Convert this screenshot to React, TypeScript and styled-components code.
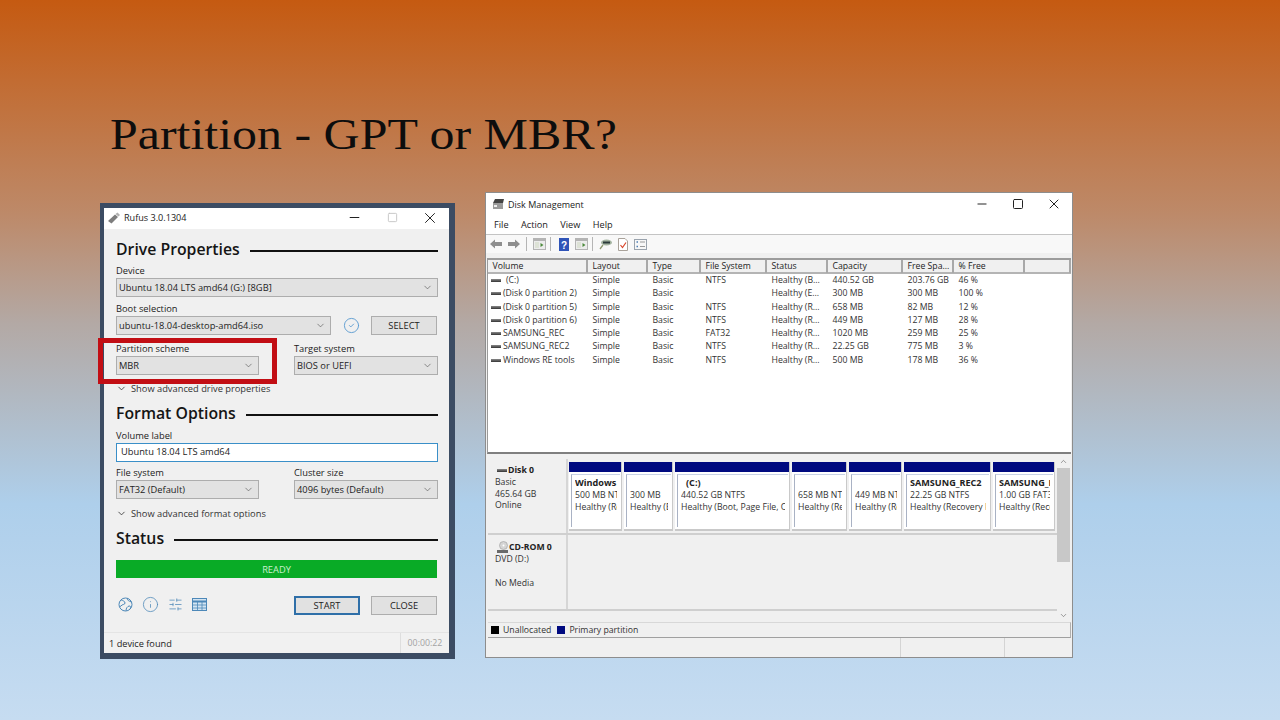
import React from 'react';
import styled, { createGlobalStyle } from 'styled-components';
import { ChevronDown, ChevronUp, CircleCheck, Info, SlidersHorizontal, Minus, Square, X } from 'lucide-react';

const Reset = createGlobalStyle`
  html, body { margin: 0; padding: 0; }
  * { box-sizing: border-box; }
`;

const UI = `"Open Sans", "Noto Sans", sans-serif`;

// slide
const Slide = styled.div`
  position: relative;
  width: 1280px;
  height: 720px;
  overflow: hidden;
  background: linear-gradient(180deg, #c55a11 0%, #bd8a6a 30%, #b3a9a5 45%, #aecfeb 70%, #c6dcf1 100%);
`;

const Title = styled.h1`
  margin: 0 0 0 110px;
  padding-top: 109px;
  font: 400 44px/52px "Liberation Serif", serif;
  color: #0d0d0d;
  white-space: nowrap;
  transform: scaleX(1.135);
  transform-origin: left;
`;

// rufus window
const RufusWindow = styled.div`
  position: absolute;
  left: 100px;
  top: 203px;
  width: 355px;
  height: 456px;
  display: flex;
  flex-direction: column;
  background: #f0f0f0;
  border: solid #3c4c63;
  border-width: 5px 6px 6px 4px;
  font-family: ${UI};
  color: #222;
`;

const RufusTitleBar = styled.div`
  height: 21px;
  flex: none;
  display: flex;
  align-items: center;
  padding: 0 0 2px 3px;
  background: #fff;
  font-size: 9.1px;
`;

const AppName = styled.span`
  margin-left: 3px;
  flex: 1;
`;

const CaptionButton = styled.span<{ $w: number; $dim?: boolean }>`
  width: ${p => p.$w}px;
  display: flex;
  justify-content: center;
  color: ${p => (p.$dim ? '#c4c4c4' : '#222')};
`;

const RufusBody = styled.div`
  flex: 1;
  padding: 0 11px 0 12px;
`;

const SectionHead = styled.div<{ $top: number }>`
  display: flex;
  align-items: center;
  gap: 10px;
  height: 20px;
  margin-top: ${p => p.$top}px;
  font-size: 15.8px;
  font-weight: 600;
  color: #151515;
  &::after {
    content: '';
    flex: 1;
    height: 2px;
    margin-top: 4px;
    background: #111;
  }
`;

const Field = styled.div<{ $top: number }>`
  margin-top: ${p => p.$top}px;
`;

const FieldLabel = styled.div`
  height: 13px;
  margin-bottom: 1px;
  font-size: 9.3px;
  line-height: 13px;
`;

const Dropdown = styled.div<{ $w?: number }>`
  width: ${p => (p.$w ? `${p.$w}px` : '100%')};
  height: 19px;
  display: flex;
  align-items: center;
  justify-content: space-between;
  padding: 0 4px 0 2px;
  background: #e2e2e2;
  border: 1px solid #adadad;
  font-size: 9.3px;
  white-space: nowrap;
`;

const TextInput = styled.div`
  height: 19px;
  padding: 0 4px;
  line-height: 16px;
  background: #fff;
  border: 1px solid #3a8fc8;
  font-size: 9.3px;
`;

const TwoCols = styled.div<{ $top: number }>`
  display: flex;
  justify-content: space-between;
  margin-top: ${p => p.$top}px;
`;

const Col = styled.div<{ $w: number }>`
  width: ${p => p.$w}px;
`;

const BootRow = styled.div`
  display: flex;
  align-items: center;
`;

const CheckSlot = styled.span`
  width: 40px;
  display: flex;
  justify-content: center;
  color: #5a9bd0;
`;

const PushButton = styled.div<{ $primary?: boolean }>`
  width: 66px;
  height: 19px;
  display: flex;
  align-items: center;
  justify-content: center;
  background: #e1e1e1;
  border: ${p => (p.$primary ? '2px solid #2f6fa8' : '1px solid #adadad')};
  font-size: 9.3px;
`;

const Toggle = styled.div<{ $top: number }>`
  display: flex;
  align-items: center;
  gap: 4px;
  height: 14px;
  margin-top: ${p => p.$top}px;
  font-size: 9.3px;
  color: #333;
`;

const ReadyBar = styled.div`
  height: 18px;
  margin-top: 12px;
  margin-right: 1px;
  display: flex;
  align-items: center;
  justify-content: center;
  background: #09ab26;
  color: #c9f0cf;
  font-size: 9.3px;
`;

const ActionRow = styled.div`
  display: flex;
  align-items: center;
  margin-top: 18px;
`;

const IconTray = styled.div`
  display: flex;
  align-items: center;
  gap: 9px;
  flex: 1;
  margin: -2px 0 0 2px;
  color: #4d88b8;
`;

const Actions = styled.div`
  display: flex;
  gap: 11px;
  margin-right: 1px;
`;

const RufusStatus = styled.div`
  height: 21px;
  flex: none;
  display: flex;
  align-items: center;
  justify-content: space-between;
  padding-left: 5px;
  background: #f1f1f1;
  border-top: 1px solid #e4e4e4;
  font-size: 9.2px;
`;

const Timer = styled.span`
  height: 100%;
  width: 49px;
  display: flex;
  align-items: center;
  justify-content: center;
  border-left: 1px solid #dedede;
  color: #a3a3a3;
  font-size: 8.8px;
`;

const RedBox = styled.div`
  position: absolute;
  left: -6px;
  top: 130px;
  width: 179px;
  height: 46px;
  border: 5px solid #c20e14;
  pointer-events: none;
`;

// disk management window
const DiskWindow = styled.div`
  position: absolute;
  left: 485px;
  top: 192px;
  width: 588px;
  height: 466px;
  display: flex;
  flex-direction: column;
  background: #f0f0f0;
  border: 1px solid #8d8d8d;
  font-family: ${UI};
  font-size: 8.7px;
  color: #222;
`;

const DiskTitleBar = styled.div`
  height: 22px;
  flex: none;
  display: flex;
  align-items: center;
  padding-left: 6px;
  background: #fff;
  font-size: 9px;
`;

const DiskTitleText = styled.span`
  margin-left: 3px;
  flex: 1;
`;

const MenuBar = styled.div`
  height: 20px;
  flex: none;
  display: flex;
  align-items: center;
  gap: 12.4px;
  padding-left: 8px;
  background: #fff;
  border-bottom: 1px solid #c4c4c4;
  font-size: 9.2px;
`;

const ToolBar = styled.div`
  height: 18px;
  flex: none;
  display: flex;
  align-items: center;
  padding-left: 3px;
  background: #f8f8f8;
`;

const Tool = styled.span<{ $ml: number }>`
  display: flex;
  margin-left: ${p => p.$ml}px;
`;

const ToolSep = styled.span<{ $ml: number }>`
  width: 1px;
  height: 14px;
  margin-left: ${p => p.$ml}px;
  background: #b5b5b5;
`;

const ListPane = styled.div`
  height: 196px;
  flex: none;
  margin: 5px 1px 0 1px;
  background: #fff;
  border-left: 1px solid #9a9a9a;
  border-bottom: 2px solid #7f7f7f;
`;

const columns = '100px 60px 53px 66px 61px 75px 51px 71px 46px';

const ListHead = styled.div`
  display: grid;
  grid-template-columns: ${columns};
  height: 16px;
  background: #f0f0f0;
  border-top: 2px solid #9c9c9c;
  border-bottom: 2px solid #b4b4b4;
`;

const HeadCell = styled.div`
  padding-left: 4.5px;
  line-height: 13px;
  border-right: 2px solid #a8a8a8;
  white-space: nowrap;
`;

const ListRow = styled.div`
  display: grid;
  grid-template-columns: ${columns};
  height: 13.25px;
  line-height: 13px;
  color: #333;
`;

const Cell = styled.div`
  padding-left: 4.5px;
  white-space: nowrap;
  overflow: hidden;
`;

const VolumeCell = styled(Cell)`
  display: flex;
  align-items: center;
  gap: 2px;
  padding-left: 3px;
`;

const VolumeName = styled.span<{ $indent?: boolean }>`
  padding-left: ${p => (p.$indent ? 3 : 0)}px;
`;

const DriveMark = styled.span`
  width: 10px;
  height: 3px;
  flex: none;
  background: linear-gradient(180deg, #8a8a8a, #333);
`;

const GraphPane = styled.div`
  flex: none;
  height: 168px;
  margin-right: 2px;
  display: flex;
`;

const DiskRows = styled.div`
  flex: 1;
  padding: 5px 0 0 2px;
  min-width: 0;
`;

const DiskRow = styled.div<{ $h: number }>`
  display: flex;
  height: ${p => p.$h}px;
  border-bottom: 2px solid #cfcfcf;
`;

const DiskInfo = styled.div`
  width: 80px;
  flex: none;
  padding: 6px 0 0 7px;
  line-height: 11.8px;
  color: #333;
  border-right: 2px solid #d6d6d6;
`;

const DiskName = styled.div`
  display: flex;
  align-items: center;
  gap: 1px;
  font-weight: 700;
  color: #222;
  margin-left: 2px;
`;

const EmptyLine = styled.div`
  height: 11.8px;
`;

const Partitions = styled.div`
  flex: 1;
  display: flex;
  gap: 2px;
  padding: 3px 0 2px 1px;
  min-width: 0;
`;

const Partition = styled.div<{ $w: number }>`
  width: ${p => p.$w}px;
  flex: none;
  display: flex;
  flex-direction: column;
  background: #fff;
  border: solid #c9c9c9;
  border-width: 0 1px 2px 0;
  &::before {
    content: '';
    height: 10px;
    flex: none;
    background: #000a80;
  }
`;

const PartitionInner = styled.div`
  flex: 1;
  margin: 2px 1px 2px 2px;
  padding: 2px 3px 0 3px;
  border-left: 1px solid #a9b2c4;
  border-top: 1px solid #c8d2e6;
`;

const PartitionText = styled.div`
  overflow: hidden;
  white-space: nowrap;
  line-height: 12px;
  color: #333;
`;

const PartName = styled.div<{ $indent?: boolean }>`
  height: 12px;
  font-size: 9.1px;
  font-weight: 700;
  color: #222;
  padding-left: ${p => (p.$indent ? 5 : 0)}px;
`;

const ScrollTrack = styled.div`
  width: 13px;
  flex: none;
  display: flex;
  flex-direction: column;
  align-items: center;
  padding-top: 3px;
  color: #555;
`;

const ScrollThumb = styled.div`
  width: 100%;
  height: 94px;
  margin: 2px 0 49px;
  background: #c8c8c8;
`;

const Legend = styled.div`
  height: 16px;
  flex: none;
  display: flex;
  align-items: center;
  gap: 4px;
  margin: 0 1px 0 2px;
  padding-left: 3px;
  border-top: 1px solid #d8d8d8;
  border-bottom: 1px solid #a0a0a0;
  border-right: 1px solid #b0b0b0;
  color: #333;
`;

const Swatch = styled.span<{ $c: string }>`
  width: 8px;
  height: 8px;
  background: ${p => p.$c};
`;

const LegendItem = styled.span`
  margin-right: 2px;
`;

const DiskStatus = styled.div`
  flex: 1;
  display: grid;
  grid-template-columns: 1fr 104px 67px;
`;

const StatusCell = styled.div`
  border-right: 1px solid #d4d4d4;
  &:last-child { border-right: 0; }
`;

// drawings
const UsbIcon = () => (
  <svg width="14" height="14" viewBox="0 0 14 14">
    <path d="M1 10 L8 3.5 L11 6 L4.5 12.5 Z" fill="#7d7d7d" />
    <path d="M8.5 3 L10.5 1.5 L13 4 L11.5 5.5 Z" fill="#b0b0b0" />
  </svg>
);

const DiskAppIcon = () => (
  <svg width="13" height="12" viewBox="0 0 13 12">
    <path d="M3 1 H12 L11 5 H1 Z" fill="#444" />
    <rect x="1" y="5" width="10" height="6" fill="#9a9a9a" />
    <rect x="2" y="7" width="3" height="2" fill="#eee" />
  </svg>
);

const Arrow = ({ flip }: { flip?: boolean }) => (
  <svg width="14" height="12" viewBox="0 0 14 12" style={{ transform: flip ? 'scaleX(-1)' : undefined }}>
    <path d="M1 6 L6 1.5 V4 H13 V8 H6 V10.5 Z" fill="#8e8e8e" />
  </svg>
);

const PaneIcon = ({ mark }: { mark: string }) => (
  <svg width="13" height="12" viewBox="0 0 13 12">
    <rect x="0.5" y="0.5" width="12" height="11" fill="#ececec" stroke="#b4b4b4" />
    <rect x="0.5" y="0.5" width="12" height="2.5" fill="#b4b4b4" />
    <rect x="2" y="4" width="4" height="6" fill="#dde2d6" />
    <path d="M7.5 5 L10.5 7 L7.5 9 Z" fill={mark} />
  </svg>
);

const HelpIcon = () => (
  <svg width="10" height="13" viewBox="0 0 10 13">
    <rect width="10" height="13" fill="#2f54b8" />
    <text x="5" y="10.5" textAnchor="middle" fontSize="10" fontWeight="700" fill="#fff" fontFamily="Liberation Sans, sans-serif">?</text>
  </svg>
);

const RescanIcon = () => (
  <svg width="13" height="12" viewBox="0 0 13 12">
    <ellipse cx="7.5" cy="4.5" rx="5.5" ry="3" fill="#a3b3a0" />
    <rect x="4" y="3.5" width="7" height="2" fill="#2c3a3a" />
    <path d="M4 7 L1 11" stroke="#8d9a6f" strokeWidth="1.3" />
  </svg>
);

const CheckDocIcon = () => (
  <svg width="10" height="13" viewBox="0 0 10 13">
    <path d="M0.5 0.5 H7 L9.5 3 V12.5 H0.5 Z" fill="#fff" stroke="#a9a29a" />
    <path d="M2.5 7 L4.5 9.5 L8 4.5" fill="none" stroke="#d9462a" strokeWidth="1.2" />
  </svg>
);

const PropsIcon = () => (
  <svg width="13" height="11" viewBox="0 0 13 11">
    <rect x="0.5" y="0.5" width="12" height="10" fill="#f7f7f7" stroke="#9aa3ad" />
    <path d="M2.5 3 H4 M2.5 7.5 H4" stroke="#4d7fb5" strokeWidth="1.5" />
    <path d="M6 3 H11 M6 7.5 H11" stroke="#9a9a9a" />
  </svg>
);

const CdIcon = () => (
  <svg width="11" height="13" viewBox="0 0 11 13">
    <circle cx="6.5" cy="4.5" r="4" fill="#d5d5d5" stroke="#9a9a9a" strokeWidth="0.6" />
    <circle cx="6.5" cy="4.5" r="1" fill="#fff" />
    <rect x="0" y="9" width="11" height="3" fill="#6a6a6a" />
  </svg>
);

const GlobeIcon = () => (
  <svg width="15" height="15" viewBox="0 0 15 15" fill="none" stroke="currentColor" strokeWidth="1">
    <circle cx="7.5" cy="7.5" r="6.5" />
    <path d="M3 2.8 C5 4 7 4 7 6 C7 8 4 7 3 9 L2 9.5 M9.5 1.5 C9 3.5 11 4 13.5 5 M8 13.8 C8 11 9.5 9.5 11 9 C12.5 8.7 13 10 12.2 12" />
  </svg>
);

const TableIcon = () => (
  <svg width="15" height="13" viewBox="0 0 15 13" fill="none" stroke="currentColor">
    <rect x="0.5" y="0.5" width="14" height="12" fill="#d3e4f2" />
    <path d="M0.5 3.5 H14.5" strokeWidth="2" />
    <path d="M0.5 7 H14.5 M0.5 10 H14.5 M5.5 4 V12.5 M10 4 V12.5" strokeWidth="0.8" />
  </svg>
);

const rows = [
  ['(C:)', 'Simple', 'Basic', 'NTFS', 'Healthy (B...', '440.52 GB', '203.76 GB', '46 %'],
  ['(Disk 0 partition 2)', 'Simple', 'Basic', '', 'Healthy (E...', '300 MB', '300 MB', '100 %'],
  ['(Disk 0 partition 5)', 'Simple', 'Basic', 'NTFS', 'Healthy (R...', '658 MB', '82 MB', '12 %'],
  ['(Disk 0 partition 6)', 'Simple', 'Basic', 'NTFS', 'Healthy (R...', '449 MB', '127 MB', '28 %'],
  ['SAMSUNG_REC', 'Simple', 'Basic', 'FAT32', 'Healthy (R...', '1020 MB', '259 MB', '25 %'],
  ['SAMSUNG_REC2', 'Simple', 'Basic', 'NTFS', 'Healthy (R...', '22.25 GB', '775 MB', '3 %'],
  ['Windows RE tools', 'Simple', 'Basic', 'NTFS', 'Healthy (R...', '500 MB', '178 MB', '36 %'],
];

const heads = ['Volume', 'Layout', 'Type', 'File System', 'Status', 'Capacity', 'Free Spa...', '% Free', ''];

const partitions = [
  { w: 53, name: 'Windows', size: '500 MB NTFS', state: 'Healthy (Recovery Partition)' },
  { w: 49, name: '', size: '300 MB', state: 'Healthy (EFI System)' },
  { w: 115, name: '(C:)', indent: true, size: '440.52 GB NTFS', state: 'Healthy (Boot, Page File, Crash Dump)' },
  { w: 55, name: '', size: '658 MB NTFS', state: 'Healthy (Recovery Partition)' },
  { w: 53, name: '', size: '449 MB NTFS', state: 'Healthy (Recovery Partition)' },
  { w: 87, name: 'SAMSUNG_REC2', size: '22.25 GB NTFS', state: 'Healthy (Recovery Partition)' },
  { w: 62, name: 'SAMSUNG_REC', size: '1.00 GB FAT32', state: 'Healthy (Recovery Partition)' },
];

const Chevron = () => <ChevronDown size={11} strokeWidth={1.4} color="#555" />;

function Rufus() {
  return (
    <RufusWindow>
      <RufusTitleBar>
        <UsbIcon />
        <AppName>Rufus 3.0.1304</AppName>
        <CaptionButton $w={38}><Minus size={15} strokeWidth={1.6} /></CaptionButton>
        <CaptionButton $w={38} $dim><Square size={11} strokeWidth={2} /></CaptionButton>
        <CaptionButton $w={38}><X size={18} strokeWidth={1.3} /></CaptionButton>
      </RufusTitleBar>
      <RufusBody>
        <SectionHead $top={10}>Drive Properties</SectionHead>
        <Field $top={5}>
          <FieldLabel>Device</FieldLabel>
          <Dropdown>Ubuntu 18.04 LTS amd64 (G:) [8GB]<Chevron /></Dropdown>
        </Field>
        <Field $top={5}>
          <FieldLabel>Boot selection</FieldLabel>
          <BootRow>
            <Dropdown $w={215}>ubuntu-18.04-desktop-amd64.iso<Chevron /></Dropdown>
            <CheckSlot><CircleCheck size={17} strokeWidth={1.3} /></CheckSlot>
            <PushButton>SELECT</PushButton>
          </BootRow>
        </Field>
        <TwoCols $top={7}>
          <Col $w={143}>
            <FieldLabel>Partition scheme</FieldLabel>
            <Dropdown>MBR<Chevron /></Dropdown>
          </Col>
          <Col $w={144}>
            <FieldLabel>Target system</FieldLabel>
            <Dropdown>BIOS or UEFI<Chevron /></Dropdown>
          </Col>
        </TwoCols>
        <Toggle $top={6}><ChevronDown size={11} strokeWidth={1.8} />Show advanced drive properties</Toggle>
        <SectionHead $top={8}>Format Options</SectionHead>
        <Field $top={6}>
          <FieldLabel>Volume label</FieldLabel>
          <TextInput>Ubuntu 18.04 LTS amd64</TextInput>
        </Field>
        <TwoCols $top={4}>
          <Col $w={143}>
            <FieldLabel>File system</FieldLabel>
            <Dropdown>FAT32 (Default)<Chevron /></Dropdown>
          </Col>
          <Col $w={144}>
            <FieldLabel>Cluster size</FieldLabel>
            <Dropdown>4096 bytes (Default)<Chevron /></Dropdown>
          </Col>
        </TwoCols>
        <Toggle $top={7}><ChevronDown size={11} strokeWidth={1.8} />Show advanced format options</Toggle>
        <SectionHead $top={8}>Status</SectionHead>
        <ReadyBar>READY</ReadyBar>
        <ActionRow>
          <IconTray>
            <GlobeIcon />
            <Info size={17} strokeWidth={1.1} />
            <SlidersHorizontal size={15} strokeWidth={1.2} />
            <TableIcon />
          </IconTray>
          <Actions>
            <PushButton $primary>START</PushButton>
            <PushButton>CLOSE</PushButton>
          </Actions>
        </ActionRow>
      </RufusBody>
      <RufusStatus>
        1 device found
        <Timer>00:00:22</Timer>
      </RufusStatus>
      <RedBox />
    </RufusWindow>
  );
}

function DiskManagement() {
  return (
    <DiskWindow>
      <DiskTitleBar>
        <DiskAppIcon />
        <DiskTitleText>Disk Management</DiskTitleText>
        <CaptionButton $w={36}><Minus size={14} strokeWidth={1.7} /></CaptionButton>
        <CaptionButton $w={36}><Square size={12} strokeWidth={2} /></CaptionButton>
        <CaptionButton $w={36}><X size={16} strokeWidth={1.5} /></CaptionButton>
      </DiskTitleBar>
      <MenuBar>
        <span>File</span>
        <span>Action</span>
        <span>View</span>
        <span>Help</span>
      </MenuBar>
      <ToolBar>
        <Tool $ml={0}><Arrow /></Tool>
        <Tool $ml={4}><Arrow flip /></Tool>
        <ToolSep $ml={5} />
        <Tool $ml={6}><PaneIcon mark="#4c8a3c" /></Tool>
        <ToolSep $ml={4} />
        <Tool $ml={8}><HelpIcon /></Tool>
        <Tool $ml={6}><PaneIcon mark="#4c8a3c" /></Tool>
        <ToolSep $ml={4} />
        <Tool $ml={6}><RescanIcon /></Tool>
        <Tool $ml={6}><CheckDocIcon /></Tool>
        <Tool $ml={6}><PropsIcon /></Tool>
      </ToolBar>
      <ListPane>
        <ListHead>
          {heads.map((h, i) => <HeadCell key={i}>{h}</HeadCell>)}
        </ListHead>
        {rows.map((r, n) => (
          <ListRow key={r[0]}>
            <VolumeCell><DriveMark /><VolumeName $indent={n === 0}>{r[0]}</VolumeName></VolumeCell>
            {r.slice(1).map((c, i) => <Cell key={i}>{c}</Cell>)}
          </ListRow>
        ))}
      </ListPane>
      <GraphPane>
        <DiskRows>
          <DiskRow $h={76}>
            <DiskInfo>
              <DiskName><DriveMark />Disk 0</DiskName>
              <div>Basic</div>
              <div>465.64 GB</div>
              <div>Online</div>
            </DiskInfo>
            <Partitions>
              {partitions.map(p => (
                <Partition key={p.size} $w={p.w}>
                  <PartitionInner>
                    <PartitionText>
                      <PartName $indent={p.indent}>{p.name}</PartName>
                      <div>{p.size}</div>
                      <div>{p.state}</div>
                    </PartitionText>
                  </PartitionInner>
                </Partition>
              ))}
            </Partitions>
          </DiskRow>
          <DiskRow $h={76}>
            <DiskInfo>
              <DiskName><CdIcon />CD-ROM 0</DiskName>
              <div>DVD (D:)</div>
              <EmptyLine />
              <div>No Media</div>
            </DiskInfo>
          </DiskRow>
        </DiskRows>
        <ScrollTrack>
          <ChevronUp size={9} strokeWidth={1.5} />
          <ScrollThumb />
          <ChevronDown size={9} strokeWidth={1.5} />
        </ScrollTrack>
      </GraphPane>
      <Legend>
        <Swatch $c="#000" />
        <LegendItem>Unallocated</LegendItem>
        <Swatch $c="#000a80" />
        <LegendItem>Primary partition</LegendItem>
      </Legend>
      <DiskStatus>
        <StatusCell />
        <StatusCell />
        <StatusCell />
      </DiskStatus>
    </DiskWindow>
  );
}

export default function App() {
  return (
    <>
      <Reset />
      <Slide>
        <Title>Partition - GPT or MBR?</Title>
        <Rufus />
        <DiskManagement />
      </Slide>
    </>
  );
}
